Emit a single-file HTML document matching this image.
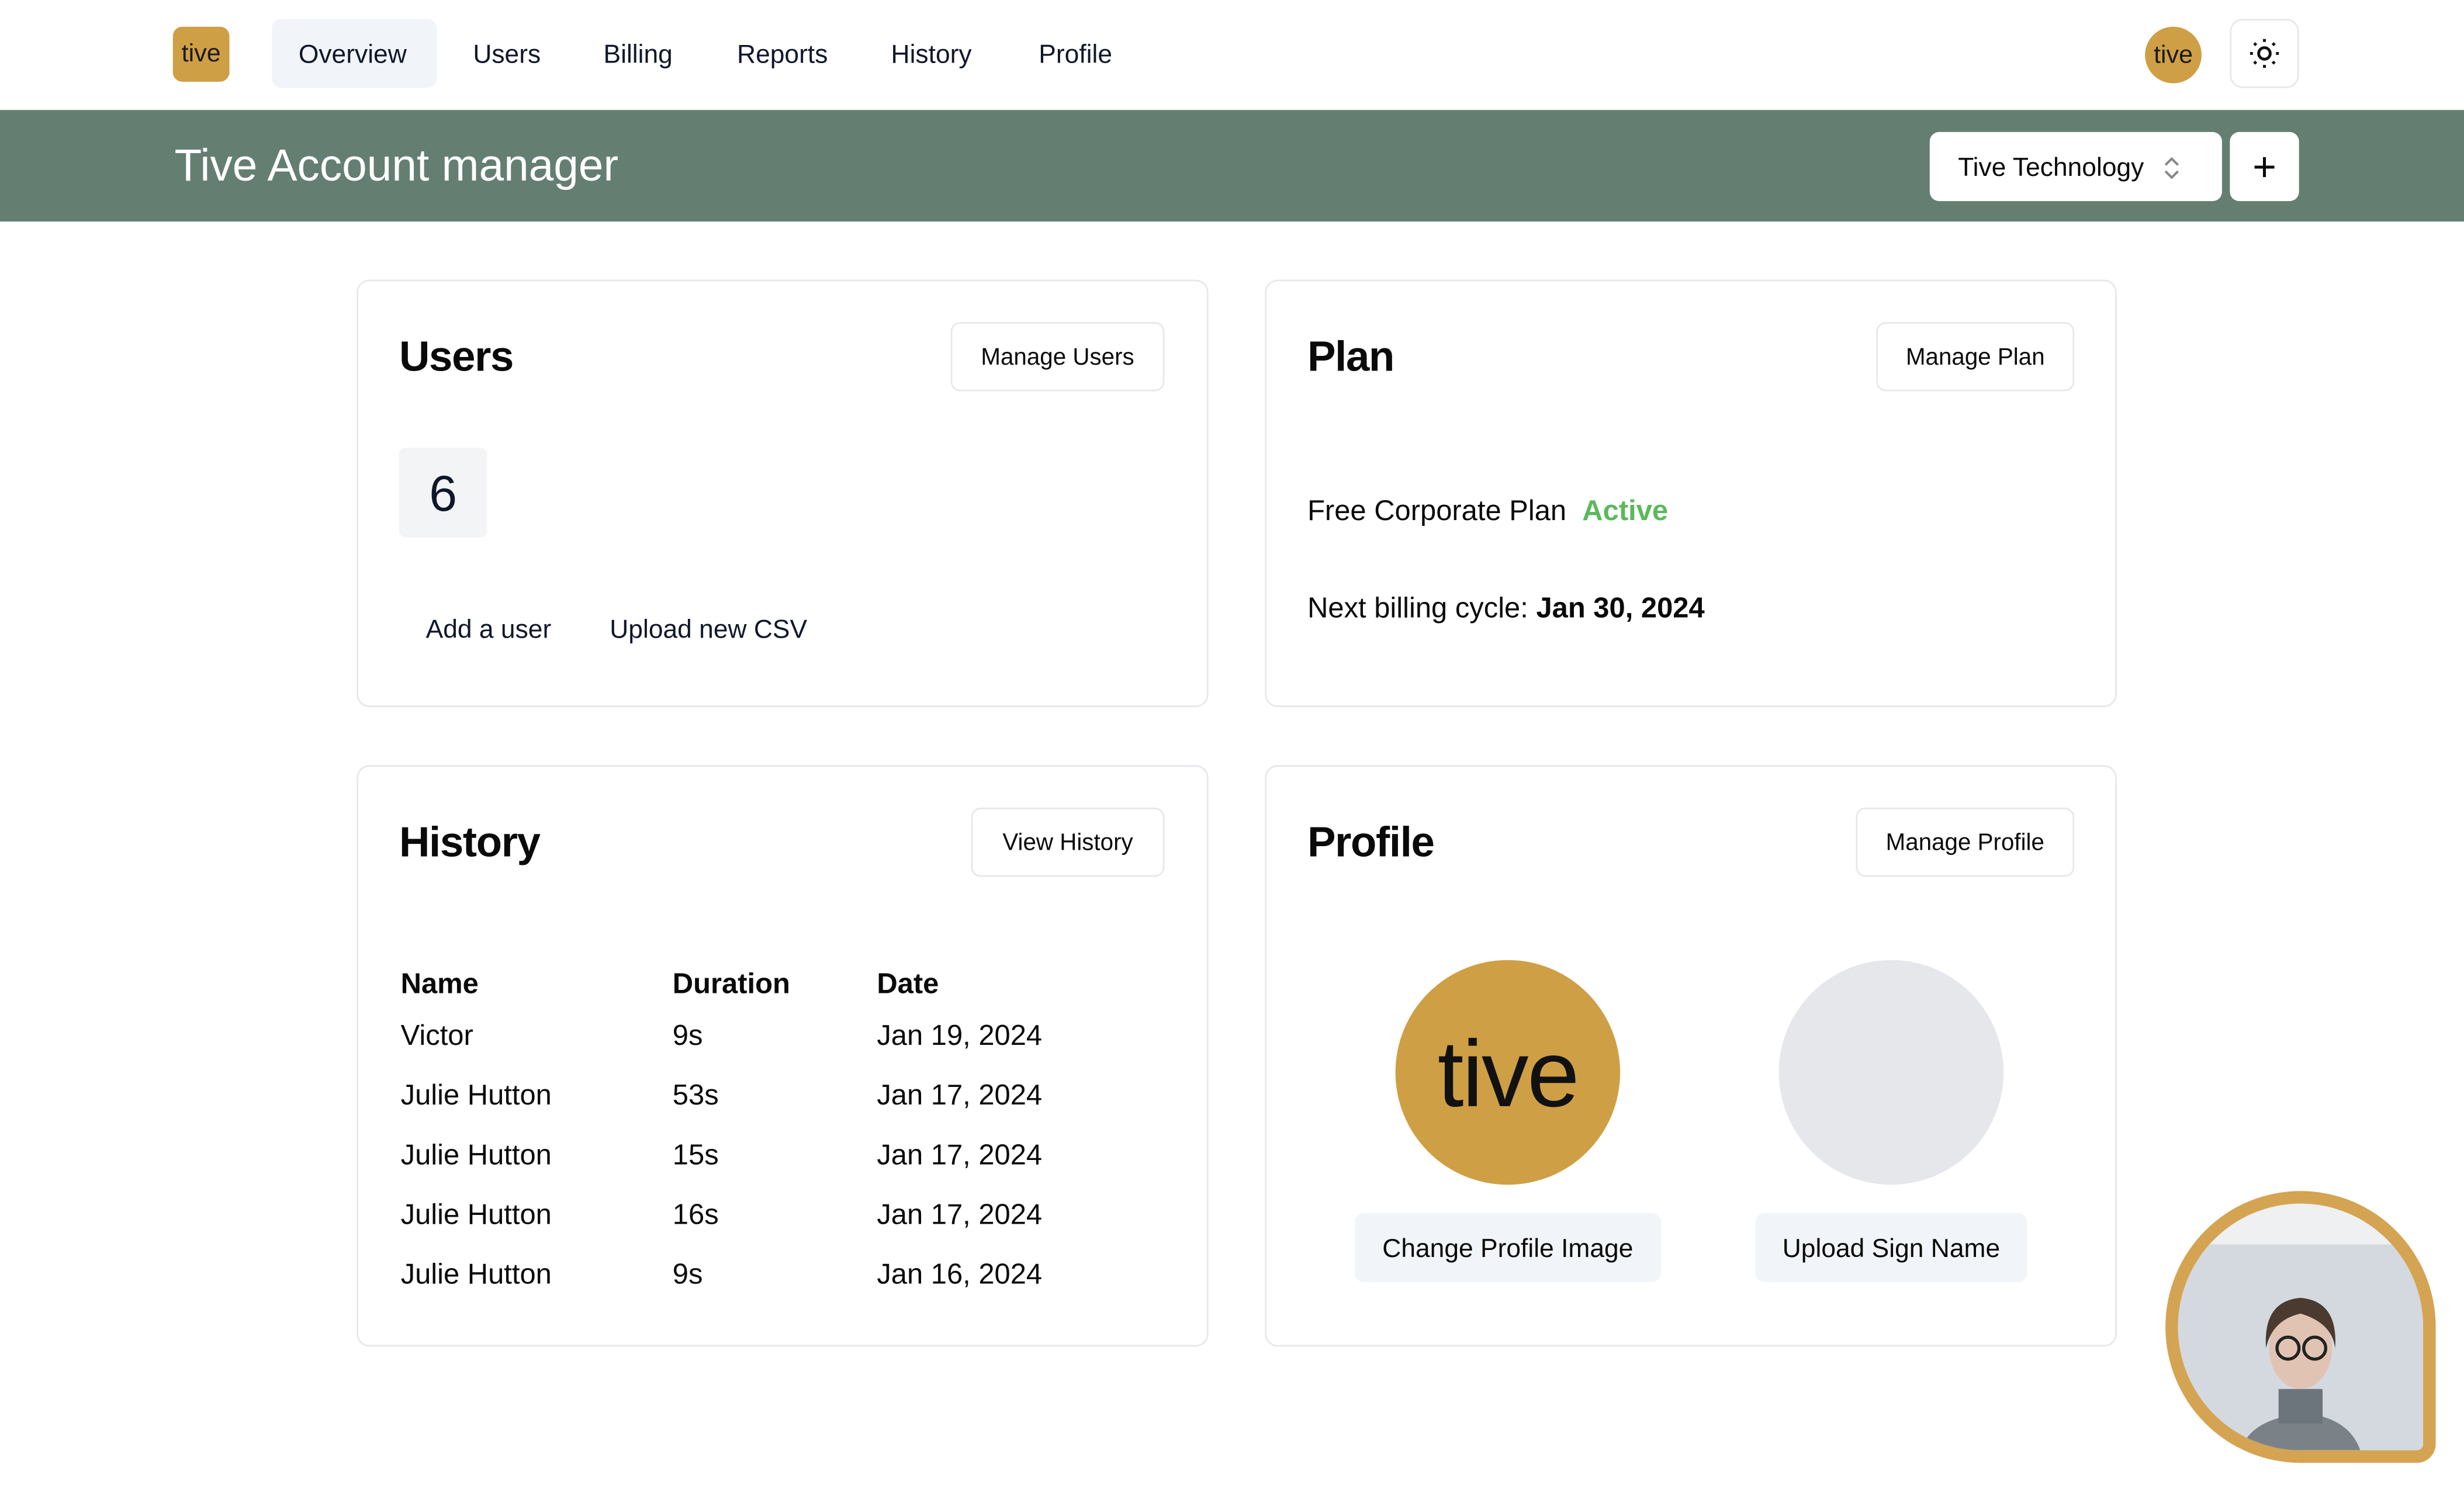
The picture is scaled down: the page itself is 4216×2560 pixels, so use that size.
<!DOCTYPE html>
<html><head><meta charset="utf-8"><style>
*{box-sizing:border-box;margin:0;padding:0}
html,body{width:4216px;height:2560px;overflow:hidden;background:#fff}
#s{width:1568px;height:952px;transform:scale(2.68878);transform-origin:0 0;position:relative;font-family:"Liberation Sans",sans-serif;color:#0f172a}
.a{position:absolute}
.nav{font-size:16.5px;top:26px;color:#0f172a}
.card{position:absolute;border:1px solid #e5e7eb;border-radius:8px;background:#fff}
.h{position:absolute;font-size:27px;font-weight:bold;color:#0a0a0a;letter-spacing:-0.5px}
.btn{position:absolute;border:1px solid #e5e7eb;border-radius:6px;background:#fff;font-size:15px;display:flex;align-items:center;justify-content:center;color:#0a0a0a}
.t{position:absolute;font-size:18.2px;color:#0a0a0a}
.b{font-weight:bold}
</style></head><body><div id="s">
<div class="a" style="left:110px;top:17px;width:36px;height:35px;background:#cf9f45;border-radius:6px;font-size:16px;line-height:36px;text-align:center;color:#1a1a1a">tive</div>
<div class="a" style="left:173px;top:12px;width:105px;height:44px;background:#f1f5f9;border-radius:6px"></div>
<div class="a nav" style="left:190px">Overview</div>
<div class="a nav" style="left:301px">Users</div>
<div class="a nav" style="left:384px">Billing</div>
<div class="a nav" style="left:469px">Reports</div>
<div class="a nav" style="left:567px">History</div>
<div class="a nav" style="left:661px">Profile</div>
<div class="a" style="left:1365px;top:17px;width:36px;height:36px;background:#cf9f45;border-radius:50%;font-size:16px;line-height:38px;text-align:center;color:#1a1a1a">tive</div>
<div class="btn" style="left:1419px;top:12px;width:44px;height:44px;border-radius:8px">
<svg width="22" height="22" viewBox="0 0 24 24" fill="none" stroke="#111" stroke-width="2"><circle cx="12" cy="12" r="4"/><path d="M12 2v2M12 20v2M4.9 4.9l1.4 1.4M17.7 17.7l1.4 1.4M2 12h2M20 12h2M6.3 17.7l-1.4 1.4M19.1 4.9l-1.4 1.4"/></svg></div>
<div class="a" style="left:0;top:70px;width:1568px;height:71px;background:#647f72"></div>
<div class="a" style="left:111px;top:90px;font-size:28.5px;color:#fff">Tive Account manager</div>
<div class="btn" style="left:1228px;top:84px;width:186px;height:44px;border:none;border-radius:6px;font-size:16.5px;justify-content:flex-start;padding-left:18px;padding-top:2px">Tive Technology
<svg width="12" height="16" viewBox="0 0 12 16" style="margin-left:12px" fill="none" stroke="#888" stroke-width="1.5"><path d="M2 6l4-4 4 4M2 10l4 4 4-4"/></svg></div>
<div class="btn" style="left:1419px;top:84px;width:44px;height:44px;border:none;font-size:26px">+</div>

<div class="card" style="left:227px;top:178px;width:542px;height:272px"></div>
<div class="h" style="left:254px;top:212px">Users</div>
<div class="btn" style="left:605px;top:205px;width:136px;height:44px">Manage Users</div>
<div class="a" style="left:254px;top:285px;width:56px;height:57px;background:#f3f4f6;border-radius:4px;font-size:32px;text-align:center;line-height:59px">6</div>
<div class="a" style="left:271px;top:392px;font-size:16.5px">Add a user</div>
<div class="a" style="left:388px;top:392px;font-size:16.5px">Upload new CSV</div>

<div class="card" style="left:805px;top:178px;width:542px;height:272px"></div>
<div class="h" style="left:832px;top:212px">Plan</div>
<div class="btn" style="left:1194px;top:205px;width:126px;height:44px">Manage Plan</div>
<div class="t" style="left:832px;top:315px">Free Corporate Plan&nbsp; <span style="color:#5cb85c;font-weight:bold">Active</span></div>
<div class="t" style="left:832px;top:377px">Next billing cycle: <span class="b">Jan 30, 2024</span></div>

<div class="card" style="left:227px;top:487px;width:542px;height:370px"></div>
<div class="h" style="left:254px;top:521px">History</div>
<div class="btn" style="left:618px;top:514px;width:123px;height:44px">View History</div>
<div class="t b" style="left:255px;top:616px">Name</div><div class="t b" style="left:428px;top:616px">Duration</div><div class="t b" style="left:558px;top:616px">Date</div>
<div class="t" style="left:255px;top:649px">Victor</div><div class="t" style="left:428px;top:649px">9s</div><div class="t" style="left:558px;top:649px">Jan 19, 2024</div>
<div class="t" style="left:255px;top:687px">Julie Hutton</div><div class="t" style="left:428px;top:687px">53s</div><div class="t" style="left:558px;top:687px">Jan 17, 2024</div>
<div class="t" style="left:255px;top:725px">Julie Hutton</div><div class="t" style="left:428px;top:725px">15s</div><div class="t" style="left:558px;top:725px">Jan 17, 2024</div>
<div class="t" style="left:255px;top:763px">Julie Hutton</div><div class="t" style="left:428px;top:763px">16s</div><div class="t" style="left:558px;top:763px">Jan 17, 2024</div>
<div class="t" style="left:255px;top:801px">Julie Hutton</div><div class="t" style="left:428px;top:801px">9s</div><div class="t" style="left:558px;top:801px">Jan 16, 2024</div>

<div class="card" style="left:805px;top:487px;width:542px;height:370px"></div>
<div class="h" style="left:832px;top:521px">Profile</div>
<div class="btn" style="left:1181px;top:514px;width:139px;height:44px">Manage Profile</div>
<div class="a" style="left:888px;top:611px;width:143px;height:143px;border-radius:50%;background:#cf9f45;font-size:60px;line-height:145px;text-align:center;color:#111;letter-spacing:-1px">tive</div>
<div class="a" style="left:1132px;top:611px;width:143px;height:143px;border-radius:50%;background:#e5e7eb"></div>
<div class="btn" style="left:862px;top:772px;width:195px;height:44px;border:none;background:#f1f5f9;font-size:16.5px;padding-top:2px">Change Profile Image</div>
<div class="btn" style="left:1117px;top:772px;width:173px;height:44px;border:none;background:#f1f5f9;font-size:16.5px;padding-top:2px">Upload Sign Name</div>

<div class="a" style="left:1378px;top:758px;width:172px;height:173px;border:8px solid #d4a453;border-radius:50% 50% 12px 50%;overflow:hidden;background:#eef0f2">
<svg width="156" height="157" viewBox="0 0 156 157" style="position:absolute;left:0;top:0">
<rect x="0" y="26" width="156" height="131" fill="#d3d9de"/>
<path d="M40 157 Q45 140 70 135 L90 135 Q110 140 116 157Z" fill="#7a8288"/>
<rect x="64" y="118" width="28" height="22" fill="#6c757b"/>
<ellipse cx="78" cy="92" rx="20" ry="26" fill="#e0c3b2"/>
<path d="M56 92 Q54 62 78 60 Q102 62 100 92 Q98 76 78 70 Q60 74 56 92Z" fill="#4a3a30"/>
<circle cx="70" cy="92" r="7" fill="none" stroke="#222" stroke-width="2"/>
<circle cx="87" cy="92" r="7" fill="none" stroke="#222" stroke-width="2"/>
</svg></div>
</div></body></html>
